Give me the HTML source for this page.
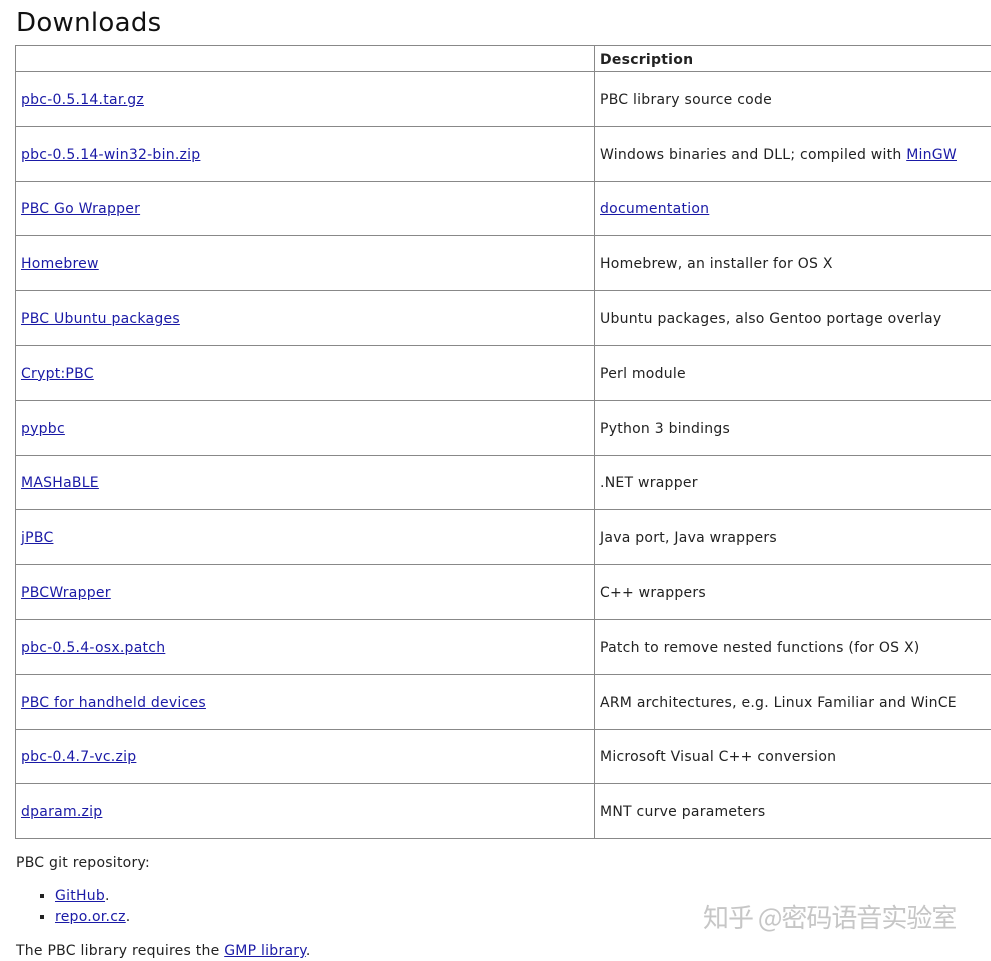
<!DOCTYPE html>
<html><head><meta charset="utf-8"><style>
body{margin:0;background:#fff;font-family:"DejaVu Sans",Verdana,sans-serif;font-size:14px;color:#222;width:991px;height:961px;overflow:hidden;position:relative;letter-spacing:0.25px}
h1{position:absolute;left:16px;top:8px;margin:0;font-weight:normal;font-size:26px;color:#111;letter-spacing:0.3px}
table{position:absolute;left:15px;top:45px;border-collapse:collapse;width:1000px}
td,th{border:1px solid #888;padding:2px 0 0 5px;text-align:left;vertical-align:middle;box-sizing:border-box}
th{height:26px;font-weight:bold;padding-top:3px}
td{height:54.8px}
td.a{width:579px}
a{color:#1a1aa6;text-decoration:underline}
.p{position:absolute;left:16px;margin:0}
ul{position:absolute;left:16px;top:886px;margin:0;padding-left:39px;list-style:square}
li{line-height:21px}
.wm{position:absolute;left:703px;top:898px;font-family:"Noto Sans CJK SC",sans-serif;font-size:26px;color:rgba(160,160,160,0.6);letter-spacing:-1px}
</style></head><body>
<h1>Downloads</h1>
<table>
<tr><th></th><th>Description</th></tr>
<tr><td class="a"><a href="#">pbc-0.5.14.tar.gz</a></td><td>PBC library source code</td></tr>
<tr><td class="a"><a href="#">pbc-0.5.14-win32-bin.zip</a></td><td>Windows binaries and DLL; compiled with <a href="#">MinGW</a></td></tr>
<tr><td class="a"><a href="#">PBC Go Wrapper</a></td><td><a href="#">documentation</a></td></tr>
<tr><td class="a"><a href="#">Homebrew</a></td><td>Homebrew, an installer for OS X</td></tr>
<tr><td class="a"><a href="#">PBC Ubuntu packages</a></td><td>Ubuntu packages, also Gentoo portage overlay</td></tr>
<tr><td class="a"><a href="#">Crypt:PBC</a></td><td>Perl module</td></tr>
<tr><td class="a"><a href="#">pypbc</a></td><td>Python 3 bindings</td></tr>
<tr><td class="a"><a href="#">MASHaBLE</a></td><td>.NET wrapper</td></tr>
<tr><td class="a"><a href="#">jPBC</a></td><td>Java port, Java wrappers</td></tr>
<tr><td class="a"><a href="#">PBCWrapper</a></td><td>C++ wrappers</td></tr>
<tr><td class="a"><a href="#">pbc-0.5.4-osx.patch</a></td><td>Patch to remove nested functions (for OS X)</td></tr>
<tr><td class="a"><a href="#">PBC for handheld devices</a></td><td>ARM architectures, e.g. Linux Familiar and WinCE</td></tr>
<tr><td class="a"><a href="#">pbc-0.4.7-vc.zip</a></td><td>Microsoft Visual C++ conversion</td></tr>
<tr><td class="a"><a href="#">dparam.zip</a></td><td>MNT curve parameters</td></tr>
</table>
<p class="p" style="top:855px">PBC git repository:</p>
<ul><li><a href="#">GitHub</a>.</li><li><a href="#">repo.or.cz</a>.</li></ul>
<p class="p" style="top:943px">The PBC library requires the <a href="#">GMP library</a>.</p>
<div class="wm">知乎 @密码语音实验室</div>
</body></html>
